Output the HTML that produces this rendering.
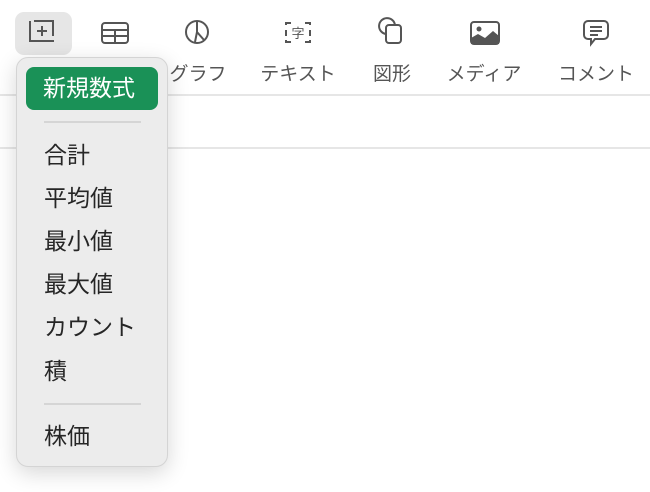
<!DOCTYPE html>
<html><head><meta charset="utf-8"><style>
*{margin:0;padding:0;box-sizing:border-box}
body{width:650px;height:492px;background:#fff;position:relative;overflow:hidden;font-family:"Liberation Sans","Noto Sans CJK JP",sans-serif}
.lbl{position:absolute;top:63px;font-size:19px;color:#555;transform:translateX(-50%);white-space:nowrap;line-height:24px}
.ic{position:absolute;top:18px}
.hl{position:absolute;left:0;width:650px;height:2px;background:#e6e6e6}
.menu{position:absolute;left:16px;top:57px;width:152px;height:410px;background:#ececec;border:1px solid #d4d4d4;border-radius:12px;box-shadow:0 6px 22px rgba(0,0,0,0.16)}
.btn{position:absolute;left:9px;top:9px;width:132px;height:43px;background:#1a9157;border-radius:8px;color:#fff;font-size:23px;line-height:43px;padding-left:17px}
.it{position:absolute;left:27px;font-size:23px;color:#262626;line-height:28px}
.dv{position:absolute;left:27px;width:97px;height:2px;background:#d5d5d5}
</style></head><body>
<div class="hl" style="top:94px"></div>
<div class="hl" style="top:147px"></div>
<div style="position:absolute;left:15px;top:12px;width:57px;height:43px;background:#e6e6e6;border-radius:9px"></div>
<svg class="ic" style="left:27px;top:19px" width="32" height="26" viewBox="0 0 32 26" fill="none" stroke="#555" stroke-width="2"><path d="M3 2v20h23M7 2h19v15M15 7v10M10 12h10"/><path d="M26 21v2" stroke-width="2"/></svg>
<svg class="ic" style="left:100px;top:21px" width="30" height="24" viewBox="0 0 30 24" fill="none" stroke="#555" stroke-width="2"><rect x="2" y="2" width="26" height="20" rx="3"/><path d="M2 9h26M2 15h26M15 9v13"/></svg>
<svg class="ic" style="left:183px;top:18px" width="28" height="28" viewBox="0 0 28 28" fill="none" stroke="#555" stroke-width="2"><circle cx="14" cy="14" r="11"/><path d="M14 3v11l7 8M14 14l-2 10"/></svg>
<svg class="ic" style="left:283px;top:20px" width="30" height="26" viewBox="0 0 30 26" fill="none" stroke="#555" stroke-width="2"><path d="M3 5V3h5M22 3h5v2M3 10v6M27 10v6M3 20v2h5M22 22h5v-2"/><text x="15" y="18" font-size="13" fill="#555" stroke="none" text-anchor="middle" font-family="Noto Sans CJK JP">字</text></svg>
<svg class="ic" style="left:376px;top:17px" width="30" height="30" viewBox="0 0 30 30" fill="none" stroke="#555" stroke-width="2"><path d="M10 17A8 8 0 1 1 19 8"/><rect x="10" y="8" width="15" height="18" rx="3"/></svg>
<svg class="ic" style="left:469px;top:20px" width="32" height="26" viewBox="0 0 32 26" fill="none"><rect x="2" y="2" width="28" height="22" rx="3" stroke="#555" stroke-width="2"/><circle cx="10" cy="9" r="2.5" fill="#555"/><path d="M2 24V18l7-4 7 4 8-7 6 5v8z" fill="#555"/></svg>
<svg class="ic" style="left:582px;top:19px" width="28" height="28" viewBox="0 0 28 28" fill="none" stroke="#555" stroke-width="2"><path d="M6 2h16a4 4 0 0 1 4 4v10a4 4 0 0 1-4 4H13l-4 5v-5H6a4 4 0 0 1-4-4V6a4 4 0 0 1 4-4z"/><path d="M8 8h12M8 12h12M8 16h8"/></svg>
<div class="lbl" style="left:198px">グラフ</div>
<div class="lbl" style="left:298px">テキスト</div>
<div class="lbl" style="left:392px">図形</div>
<div class="lbl" style="left:484px">メディア</div>
<div class="lbl" style="left:596px">コメント</div>
<div class="menu">
<div class="btn">新規数式</div>
<div class="dv" style="top:63px"></div>
<div class="it" style="top:83px">合計</div>
<div class="it" style="top:126px">平均値</div>
<div class="it" style="top:169px">最小値</div>
<div class="it" style="top:212px">最大値</div>
<div class="it" style="top:255px">カウント</div>
<div class="it" style="top:299px">積</div>
<div class="dv" style="top:345px"></div>
<div class="it" style="top:364px">株価</div>
</div>
</body></html>
